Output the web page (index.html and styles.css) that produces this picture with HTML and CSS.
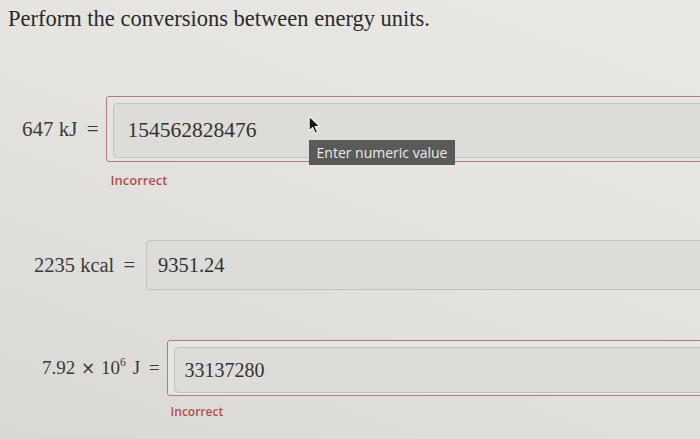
FILE: index.html
```html
<!DOCTYPE html>
<html lang="en">
<head>
<meta charset="utf-8">
<title>Energy unit conversions</title>
<link rel="stylesheet" href="styles.css">
</head>
<body>
<main class="page">
  <h1 class="title">Perform the conversions between energy units.</h1>

  <div class="row row-1">
    <div class="label">647&nbsp;kJ <span class="eq">=</span></div>
    <div class="answer">
      <div class="input">154562828476</div>
      <svg class="cursor" width="14" height="20" viewBox="0 0 12 17" aria-hidden="true">
        <path d="M1 1 L1 13.5 L4 10.6 L6.2 15.6 L8.2 14.7 L6 9.8 L10.2 9.8 Z" fill="#151515" stroke="#f4f4f4" stroke-width="0.9" stroke-linejoin="round"/>
      </svg>
      <div class="tooltip">Enter numeric value</div>
    </div>
    <div class="feedback">Incorrect</div>
  </div>

  <div class="row row-2">
    <div class="label">2235&nbsp;kcal <span class="eq">=</span></div>
    <div class="input">9351.24</div>
  </div>

  <div class="row row-3">
    <div class="label">7.92 <span class="times">×</span> 10<sup>6</sup>&nbsp;J <span class="eq">=</span></div>
    <div class="answer">
      <div class="input">33137280</div>
    </div>
    <div class="feedback">Incorrect</div>
  </div>
</main>
</body>
</html>
```

FILE: styles.css
```css
html, body {
  margin: 0;
  padding: 0;
  height: 100%;
  overflow: hidden;
}

body {
  background: linear-gradient(200deg, #e9e8e4 0%, #e4e3df 45%, #d9d8d5 100%);
  font-family: "Liberation Serif", "Times New Roman", serif;
  color: #383838;
}

.page {
  padding: 5px 0 0 8px;
  width: 740px;
}

.title {
  margin: 0;
  font-size: 22.5px;
  line-height: 27px;
  font-weight: normal;
  color: #2a2a2a;
}

.row {
  display: grid;
  grid-template-columns: auto 1fr;
  align-items: center;
}

.label {
  white-space: nowrap;
  color: #3a3a3a;
}

.eq {
  margin-left: 4px;
}

.times {
  font-family: "DejaVu Sans", sans-serif;
  font-size: 0.9em;
  margin: 0 1px;
}

sup {
  font-size: 0.62em;
  line-height: 0;
  vertical-align: 0.7em;
  margin-right: 2px;
}

.answer {
  position: relative;
  border: 1px solid #b77a7a;
  border-radius: 3px;
  background: #e6e5e1;
}

.input {
  background: #dddcd8;
  border: 1px solid #c3c2be;
  border-radius: 4px;
  display: flex;
  align-items: center;
  color: #333;
  box-sizing: border-box;
}

.feedback {
  grid-column: 2;
  font-family: "Open Sans", "Liberation Sans", sans-serif;
  font-weight: 600;
  color: #b0504e;
}

/* Row 1 */
.row-1 {
  margin-top: 64px;
  padding-left: 14px;
  column-gap: 7px;
}
.row-1 .label {
  font-size: 21px;
}
.row-1 .answer {
  padding: 6px 6px 3px;
}
.row-1 .input {
  height: 55px;
  padding-left: 14px;
  font-size: 21.5px;
}
.row-1 .feedback {
  font-size: 13px;
  line-height: 16px;
  margin-top: 10px;
  padding-left: 5px;
}

.cursor {
  position: absolute;
  left: 201px;
  top: 18px;
}

.tooltip {
  position: absolute;
  left: 202px;
  top: 43px;
  background: #5a5a58;
  color: #ececec;
  font-family: "Open Sans", "Liberation Sans", sans-serif;
  font-size: 14px;
  line-height: 25px;
  padding: 0 8px 0 8px;
  white-space: nowrap;
}

/* Row 2 */
.row-2 {
  margin-top: 52px;
  padding-left: 26px;
  column-gap: 11px;
}
.row-2 .label {
  font-size: 20.5px;
}
.row-2 .input {
  height: 50px;
  padding-left: 11px;
  font-size: 20.5px;
}

/* Row 3 */
.row-3 {
  margin-top: 50px;
  padding-left: 34px;
  column-gap: 7px;
}
.row-3 .label {
  font-size: 19px;
}
.row-3 .answer {
  padding: 6px 5px 2px 6px;
}
.row-3 .input {
  height: 46px;
  padding-left: 10px;
  font-size: 20px;
}
.row-3 .feedback {
  font-size: 12px;
  line-height: 14px;
  margin-top: 9px;
  padding-left: 4px;
}
```
